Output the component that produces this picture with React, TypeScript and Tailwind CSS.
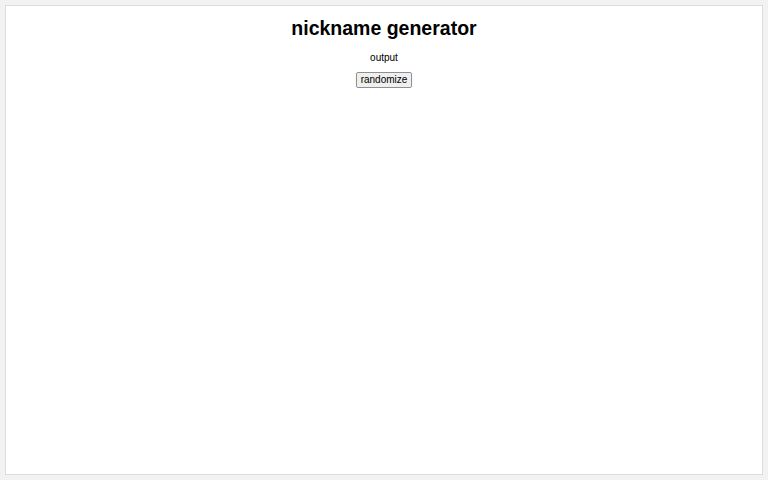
export default function App() {
  return (
    <div className="h-screen bg-[#f2f2f2] p-[5px] font-['Liberation_Sans',Arial,sans-serif]">
      <div className="h-full bg-white border border-[#dcdcdc] flex flex-col items-center pt-[11px] text-black">
        <h1 className="text-[19.5px] leading-[22px] font-bold">nickname generator</h1>
        <p className="mt-[13px] text-[10px] leading-[12px]">output</p>
        <button className="mt-[8px] px-[4px] h-[16px] text-[10px] leading-[12px] bg-[#efefef] border border-[#8f8f8f] rounded-[2px]">
          randomize
        </button>
      </div>
    </div>
  );
}
